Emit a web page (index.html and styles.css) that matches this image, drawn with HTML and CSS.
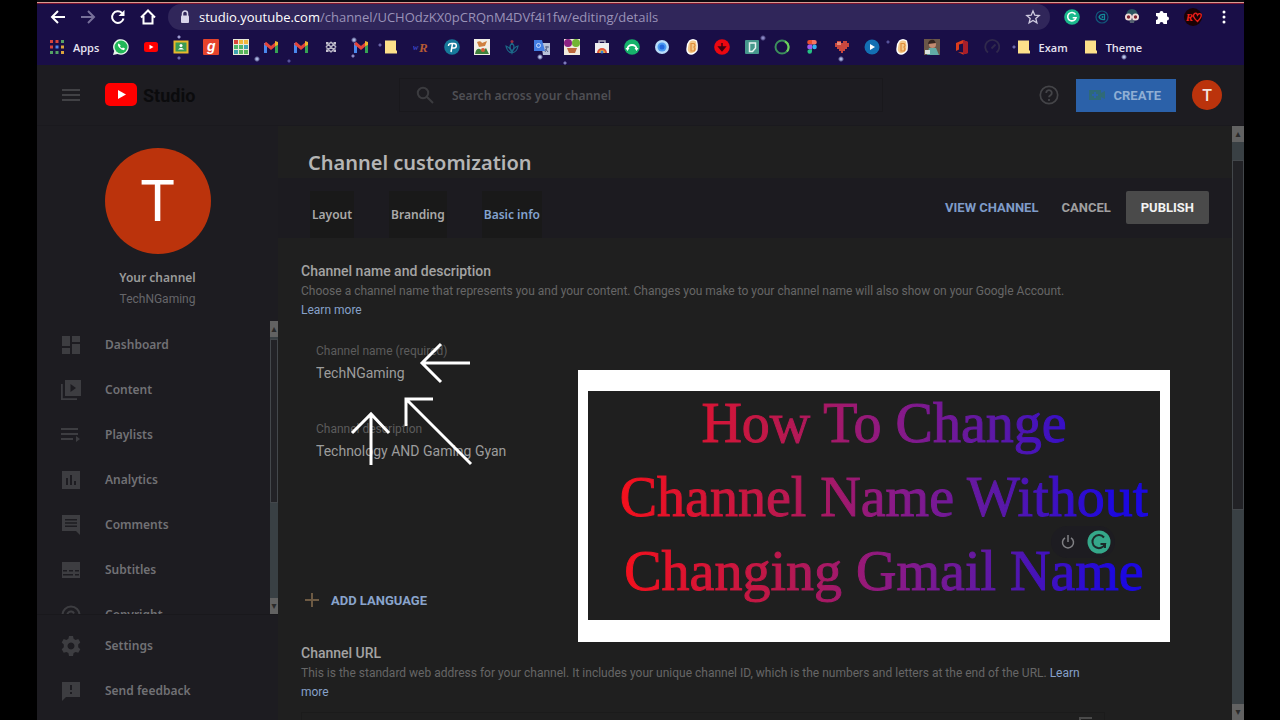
FILE: index.html
```
<!DOCTYPE html>
<html lang="en">
<head>
  <meta charset="UTF-8">
  <meta name="viewport" content="width=device-width, initial-scale=1.0">
  <title>Channel customization - YouTube Studio</title>
  <link rel="stylesheet" href="styles.css">
</head>
<body>
  <div class="screen">
    <div class="tabstrip"></div>

    <!-- browser toolbar -->
    <div class="toolbar">
      <button class="tool" aria-label="Back"><svg viewBox="0 0 16 16"><path d="M15 8H2M8 2L2 8l6 6" fill="none" stroke="#fff" stroke-width="2"/></svg></button>
      <button class="tool" aria-label="Forward"><svg viewBox="0 0 16 16"><path d="M1 8h13M8 2l6 6-6 6" fill="none" stroke="#77709a" stroke-width="2"/></svg></button>
      <button class="tool" aria-label="Reload"><svg viewBox="0 0 16 16"><path d="M13.5 9.5A5.8 5.8 0 1 1 12 4" fill="none" stroke="#fff" stroke-width="2"/><path d="M14.5 1v6h-6z" fill="#fff"/></svg></button>
      <button class="tool" aria-label="Home"><svg viewBox="0 0 16 16"><path d="M1 8.5L8 1.500l7 7M3.500 7v7.500h9V7" fill="none" stroke="#fff" stroke-width="2"/></svg></button>
      <div class="address">
        <svg class="lock" viewBox="0 0 10 14"><path d="M2.500 6V3.500a2.500 2.500 0 0 1 5 0V6" fill="none" stroke="#d8d4e8" stroke-width="1.500"/><rect x="1" y="5.500" width="8" height="7.500" rx="1" fill="#d8d4e8"/></svg>
        <span class="url"><b>studio.youtube.com</b>/channel/UCHOdzKX0pCRQnM4DVf4i1fw/editing/details</span>
        <svg class="star" viewBox="0 0 16 16"><path d="M8 2l1.800 4.200 4.400.4-3.400 2.900 1.100 4.400L8 11.500l-3.900 2.400 1.100-4.400L1.800 6.600l4.400-.4z" fill="none" stroke="#cfcbe0" stroke-width="1.300"/></svg>
      </div>
      <div class="extensions">
        <svg viewBox="0 0 16 16"><circle cx="8" cy="8" r="7.800" fill="#1bb98d"/><path d="M11.500 5.500A4.200 4.200 0 1 0 12 8.700H8.700" fill="none" stroke="#fff" stroke-width="1.600"/></svg>
        <svg viewBox="0 0 16 16"><circle cx="8" cy="8" r="6" fill="none" stroke="#12567a" stroke-width="1.200"/><path d="M10.500 5.500Q6 5 5 8q1 3 5.500 2.500z" fill="none" stroke="#138a97" stroke-width="1.300"/><circle cx="8.500" cy="8" r="1" fill="#138a97"/></svg>
        <svg viewBox="0 0 16 16"><path d="M2 6q1-6 6-6t6 6z" fill="#2b5560"/><path d="M5 10h6l-1 4H6z" fill="#546070"/><circle cx="4.500" cy="8" r="3.500" fill="#f0dcd8"/><circle cx="11.500" cy="8" r="3.500" fill="#f0dcd8"/><circle cx="4.500" cy="8" r="1.700" fill="#7c2430"/><circle cx="11.500" cy="8" r="1.700" fill="#7c2430"/></svg>
        <svg viewBox="0 0 16 16"><path d="M2 4h3.500a2 2 0 1 1 4 0H13v3.500a2 2 0 1 1 0 4V15H9.500a2 2 0 1 0-4 0H2v-4a2 2 0 1 0 0-4z" fill="#fff"/></svg>
        <svg class="wide" viewBox="0 0 20 20"><circle cx="10" cy="10" r="10" fill="#190205"/><text x="2" y="14" class="fav-serif" font-size="12" fill="#f1211b">R</text><path d="M15 15q-7-6-3-9 2-1 3 2 2-3 4-1 1 3-4 8z" fill="none" stroke="#e71e1b" stroke-width="1.500"/></svg>
        <svg viewBox="0 0 16 16" fill="#fff"><circle cx="8" cy="3" r="1.500"/><circle cx="8" cy="8" r="1.500"/><circle cx="8" cy="13" r="1.500"/></svg>
      </div>
    </div>

    <!-- bookmarks -->
    <div class="bookmarks">
      <a href="#" class="apps"><svg viewBox="0 0 16 16"><path d="M1 1h3v3H1zM6.500 1h3v3h-3zM1 6.500h3v3H1z" fill="#d8453c"/><path d="M12 1h3v3h-3zM1 12h3v3H1zM6.500 12h3v3h-3z" fill="#55a166"/><path d="M6.500 6.500h3v3h-3z" fill="#4e86ea"/><path d="M12 6.500h3v3h-3zM12 12h3v3h-3z" fill="#dca43d"/></svg>Apps</a>
      <div class="favs">
        <a href="#" aria-label="WhatsApp"><svg viewBox="0 0 16 16"><path d="M0 16l1.200-4A7.800 7.800 0 1 1 4.500 15z" fill="#e8f7ec"/><circle cx="8" cy="8" r="6.500" fill="#21b858"/><path d="M5.500 4.500q-1.500 1.500.7 4t4.800 2.700l1-1.700-2-1-1 .8q-1.500-.5-2-2l.7-1z" fill="#fff"/></svg></a>
        <a href="#" aria-label="YouTube"><svg viewBox="0 0 16 16"><rect x="1" y="3" width="14" height="10" rx="2.500" fill="#f00"/><path d="M6.500 5.700v4.600l4-2.300z" fill="#fff"/></svg></a>
        <a href="#" aria-label="Classroom"><svg viewBox="0 0 16 16"><rect x=".5" y="1.500" width="15" height="13" fill="#e8b82c"/><rect x="2.500" y="3.500" width="11" height="9" fill="#3a9b53"/><circle cx="8" cy="6.500" r="1.500" fill="#fff"/><path d="M5 10.500q3-3.500 6 0z" fill="#fff"/></svg></a>
        <a href="#" aria-label="Gaana"><svg viewBox="0 0 16 16"><rect width="16" height="16" rx="1" fill="#e5432c"/><text x="4" y="12" class="fav-bold" font-size="14" fill="#fff">g</text></svg></a>
        <a href="#" aria-label="Sheets"><svg viewBox="0 0 16 16"><rect width="16" height="16" fill="#e9ead8"/><path d="M1 1h4v4H1z" fill="#d8443a"/><path d="M6 1h4v4H6zM11 1h4v4h-4z" fill="#f0b93a"/><path d="M1 6h4v4H1zM6 6h4v4H6z" fill="#4db66a"/><path d="M11 6h4v4h-4zM1 11h4v4H1z" fill="#3fa3b0"/><path d="M6 11h4v4H6zM11 11h4v4h-4z" fill="#58b45b"/></svg></a>
        <a href="#" aria-label="Gmail"><svg viewBox="0 0 16 16"><path d="M2.500 14V4" stroke="#4a88ec" stroke-width="3"/><path d="M13.500 14V4" stroke="#36a354" stroke-width="3"/><path d="M2 4l6 5 6-5" fill="none" stroke="#e3453a" stroke-width="3"/><path d="M12 2l3 1v3l-3 1z" fill="#edb62c"/></svg></a>
        <a href="#" aria-label="Gmail"><svg viewBox="0 0 16 16"><path d="M2.500 14V4" stroke="#4a88ec" stroke-width="3"/><path d="M13.500 14V4" stroke="#36a354" stroke-width="3"/><path d="M2 4l6 5 6-5" fill="none" stroke="#e3453a" stroke-width="3"/><path d="M12 2l3 1v3l-3 1z" fill="#edb62c"/></svg></a>
        <a href="#" aria-label="Joomla"><svg viewBox="0 0 16 16"><path d="M5 5l6 6M11 5l-6 6M8 3L3 8M8 3l5 5M8 13L3 8M8 13l5-5" stroke="#b9b6c6" stroke-width="1.500"/><path d="M3 3h2.500v2.500H3zM10.500 3H13v2.500h-2.500zM3 10.500h2.500V13H3zM10.500 10.500H13V13h-2.500z" fill="#c4c1cf"/></svg></a>
        <a href="#" aria-label="Gmail"><svg viewBox="0 0 16 16"><path d="M2.500 14V4" stroke="#4a88ec" stroke-width="3"/><path d="M13.500 14V4" stroke="#36a354" stroke-width="3"/><path d="M2 4l6 5 6-5" fill="none" stroke="#e3453a" stroke-width="3"/><path d="M12 2l3 1v3l-3 1z" fill="#edb62c"/></svg></a>
        <a href="#" aria-label="Folder"><svg viewBox="0 0 16 16"><path d="M2 1.500h11v10h1v3H2z" fill="#fce08a"/></svg></a>
        <a href="#" aria-label="WR"><svg viewBox="0 0 16 16"><text x="0" y="11" class="fav-serif" font-size="8" fill="#3a45c8">w</text><text x="6" y="13" class="fav-serif" font-size="13" fill="#b55a34">R</text></svg></a>
        <a href="#" aria-label="Pexels"><svg viewBox="0 0 16 16"><circle cx="8" cy="8" r="7.800" fill="#16799a"/><path d="M7 13l1.500-8.500h1.500a2.300 2.300 0 0 1 0 4.600H8M4.500 7q0-3 4-2.500" fill="none" stroke="#fff" stroke-width="1.500"/></svg></a>
        <a href="#" aria-label="Art"><svg viewBox="0 0 16 16"><path d="M0 0h16v16H0z" fill="#f2efe6"/><path d="M3 3q4-2 5 1l5-2-2 5-6 1z" fill="#cf803f"/><path d="M1 15q1-6 5-5l3 2 3-3 3 6z" fill="#3f813c"/><circle cx="9" cy="11" r="2" fill="#d55b34"/></svg></a>
        <a href="#" aria-label="Lotus"><svg viewBox="0 0 16 16"><path d="M8 14Q3 13 2 7q4 1 6 7 2-6 6-7-1 6-6 7zM8 12Q4 8 8 4q4 4 0 8z" fill="none" stroke="#1b6787" stroke-width="1.200"/><circle cx="8" cy="2.500" r="1.500" fill="#9a3042"/></svg></a>
        <a href="#" aria-label="Translate"><svg viewBox="0 0 16 16"><path d="M7 4h9v12H9z" fill="#b9c2d8"/><path d="M0 1h8l3 11H0z" fill="#437ee2"/><circle cx="4.500" cy="6.500" r="2" fill="none" stroke="#c7dcff" stroke-width="1"/><path d="M11 8h4M13 7q0 4-2 6M11 10q2 1 3 3" fill="none" stroke="#586588"/></svg></a>
        <a href="#" aria-label="Flowers"><svg viewBox="0 0 16 16"><path d="M0 0h16v16H0z" fill="#f1ebdd"/><circle cx="4" cy="4" r="4" fill="#8c2284"/><circle cx="12" cy="4" r="4" fill="#72b533"/><path d="M3 9h10l-2 5H5z" fill="#be683c"/></svg></a>
        <a href="#" aria-label="Web Store"><svg viewBox="0 0 16 16"><path d="M1 4h14v10H1z" fill="#efedef"/><path d="M5 4V2h6v2" fill="none" stroke="#b6b1c6" stroke-width="1.500"/><path d="M3 14a5 5 0 0 1 10 0z" fill="#e05139"/><path d="M5 14a3 3 0 0 1 6 0z" fill="#edb83d"/><circle cx="8" cy="13" r="1.500" fill="#3f81d7"/></svg></a>
        <a href="#" aria-label="Green arc"><svg viewBox="0 0 16 16"><circle cx="8" cy="8" r="7.800" fill="#16b26b"/><path d="M3.500 10a4.500 4 0 0 1 9 0" fill="none" stroke="#fff" stroke-width="1.800"/><path d="M1.500 9h4l-2 3zM10.500 9h4l-2 3z" fill="#fff"/></svg></a>
        <a href="#" aria-label="Blue dot"><svg viewBox="0 0 16 16"><circle cx="8" cy="8" r="7" fill="#b9dcfa"/><circle cx="8" cy="8" r="4.500" fill="#4b9af2"/><circle cx="8" cy="8" r="2.500" fill="#2468dd"/></svg></a>
        <a href="#" aria-label="B"><svg viewBox="0 0 16 16"><path d="M5 1.500q4-3 8 0 1.500 5 .5 10-3 5-8 4-4-2-3-7 0-4 2.500-7z" fill="#fff"/><path d="M6 2.500q3-2 6 0 1 4 .3 8.500-2.300 4-6.300 3-3-2-2-5.500 0-3.500 2-6z" fill="#f4c98a"/><path d="M7 4.500h3q2 2 0 3.500 2 2 0 4H7z" fill="none" stroke="#e08f3c" stroke-width="1.200"/></svg></a>
        <a href="#" aria-label="Downloader"><svg viewBox="0 0 16 16"><circle cx="8" cy="8" r="7.800" fill="#eb0710"/><path d="M8 4v5M5 8l3 3.500L11 8z" fill="#3d0311" stroke="#3d0311" stroke-width="1.500"/></svg></a>
        <a href="#" aria-label="Pixabay"><svg viewBox="0 0 16 16"><rect x="1" y="1" width="14" height="14" rx="1" fill="#46988c"/><path d="M5.500 4h6v5l-3 3.500h-3z" fill="none" stroke="#e7f4f1" stroke-width="1.500"/></svg></a>
        <a href="#" aria-label="Ring"><svg viewBox="0 0 16 16"><circle cx="8" cy="8" r="6.500" fill="none" stroke="#3c8f5c" stroke-width="2"/><path d="M11 2.500a6.500 6.500 0 0 1 2 10" fill="none" stroke="#6fd05b" stroke-width="2"/></svg></a>
        <a href="#" aria-label="Figma"><svg viewBox="0 0 16 16"><path d="M8 1H5.500a2.300 2.300 0 0 0 0 4.600H8z" fill="#e9502e"/><path d="M8 1h2.500a2.300 2.300 0 0 1 0 4.600H8z" fill="#f87564"/><path d="M8 5.600H5.500a2.300 2.300 0 0 0 0 4.600H8z" fill="#a05aef"/><circle cx="10.500" cy="7.900" r="2.300" fill="#36b1ee"/><path d="M8 10.200H5.500A2.300 2.300 0 1 0 8 12.500z" fill="#25c083"/></svg></a>
        <a href="#" aria-label="Heart"><svg viewBox="0 0 16 16"><path d="M3 2h4v2h2V2h4v2h2v4h-2v2h-2v2H9v2H7v-2H5v-2H3V8H1V4h2z" fill="#c8473e"/><path d="M3 3h4v3H3z" fill="#e58b78"/></svg></a>
        <a href="#" aria-label="Player"><svg viewBox="0 0 16 16"><circle cx="8" cy="8" r="7.500" fill="#136fb3"/><path d="M6 5v6l5-3z" fill="#fff"/></svg></a>
        <a href="#" aria-label="B"><svg viewBox="0 0 16 16"><path d="M5 1.500q4-3 8 0 1.500 5 .5 10-3 5-8 4-4-2-3-7 0-4 2.500-7z" fill="#fff"/><path d="M6 2.500q3-2 6 0 1 4 .3 8.500-2.300 4-6.300 3-3-2-2-5.500 0-3.500 2-6z" fill="#f4c98a"/><path d="M7 4.500h3q2 2 0 3.500 2 2 0 4H7z" fill="none" stroke="#e08f3c" stroke-width="1.200"/></svg></a>
        <a href="#" aria-label="Photo"><svg viewBox="0 0 16 16"><path d="M0 0h16v16H0z" fill="#6a5648"/><path d="M5 9h7l3 7H3z" fill="#61aaa5"/><circle cx="8.500" cy="5.500" r="3.500" fill="#c28a70"/><path d="M4 5q1-5 6-4l2 3z" fill="#33231e"/><path d="M1 11h5v4H1z" fill="#d9e2df"/></svg></a>
        <a href="#" aria-label="Office"><svg viewBox="0 0 16 16"><path d="M2 4l7-3 5 2v11l-5 1.500L4 13l5 .5V4.500L5 5.500v5L2 12z" fill="#dc3c1c"/><path d="M9 1l5 2v11l-5 1.500z" fill="#a81e2a"/></svg></a>
        <a href="#" aria-label="Gauge"><svg viewBox="0 0 16 16"><path d="M4 13.500a7 7 0 1 1 8.500 0M7.500 9.500l4-4" fill="none" stroke="#30294c" stroke-width="1.800"/></svg></a>
      </div>
      <a href="#" class="folder"><svg viewBox="0 0 16 16"><path d="M2 1.500h11v10h1v3H2z" fill="#fce08a"/></svg>Exam</a>
      <a href="#" class="folder"><svg viewBox="0 0 16 16"><path d="M2 1.500h11v10h1v3H2z" fill="#fce08a"/></svg>Theme</a>
    </div>

    <!-- studio header -->
    <header class="header">
      <button class="menu" aria-label="Menu"><svg viewBox="0 0 18 12"><path d="M0 1h18M0 6h18M0 11h18" stroke="#414145" stroke-width="2"/></svg></button>
      <a href="#" class="logo">
        <svg viewBox="0 0 32 24"><rect width="32" height="23" rx="5" fill="#f00"/><path d="M13 7v9l8-4.500z" fill="#fff"/></svg>
        <span>Studio</span>
      </a>
      <div class="search">
        <svg viewBox="0 0 18 18"><circle cx="7" cy="7" r="5.200" fill="none" stroke="#3b3b3f" stroke-width="2"/><path d="M11 11l6 6" stroke="#3b3b3f" stroke-width="2"/></svg>
        <input type="text" aria-label="Search" placeholder="Search across your channel">
      </div>
      <div class="account">
        <button class="help" aria-label="Help"><svg viewBox="0 0 20 20"><circle cx="10" cy="10" r="8.700" fill="none" stroke="#444448" stroke-width="1.700"/><path d="M7.200 8a2.800 2.800 0 1 1 4.300 2.300Q10 11.300 10 12.300M10 14v2" fill="none" stroke="#444448" stroke-width="1.800"/></svg></button>
        <button class="create"><svg viewBox="0 0 18 14"><path d="M1 2h12v3l4-2v8l-4-2v3H1z" fill="#2f6a78"/><path d="M7 4v6M4 7h6" stroke="#2b61a9" stroke-width="2"/></svg>CREATE</button>
        <button class="avatar">T</button>
      </div>
    </header>

    <div class="app">
      <aside class="sidebar">
        <div class="profile">
          <div class="photo">T</div>
          <strong>Your channel</strong>
          <span>TechNGaming</span>
        </div>
        <div class="nav-wrap">
          <nav class="nav">
            <a href="#"><svg viewBox="0 0 20 20"><path d="M1 1h8v10H1zM11 1h8v6h-8zM1 13h8v6H1zM11 9h8v10h-8z"/></svg>Dashboard</a>
            <a href="#"><svg viewBox="0 0 20 20"><path d="M4 0h16v16H4zM9.500 4v8l5.500-4zM0 4h1.800v14.200H16V20H0z" fill-rule="evenodd"/></svg>Content</a>
            <a href="#"><svg viewBox="0 0 20 20"><path d="M0 3h17v2H0zM0 8h17v2H0zM0 13h12v2H0zM15 11l4 3-4 3z"/></svg>Playlists</a>
            <a href="#"><svg viewBox="0 0 20 20"><path d="M1 1h18v18H1zM5 8v7h2V8zM9 5v10h2V5zM13 11v4h2v-4z" fill-rule="evenodd"/></svg>Analytics</a>
            <a href="#"><svg viewBox="0 0 20 20"><path d="M1 0h18v20l-4-4H1zM4 4v1.500h12V4zM4 7.300v1.500h12V7.300zM4 10.600v1.500h12v-1.500z" fill-rule="evenodd"/></svg>Comments</a>
            <a href="#"><svg viewBox="0 0 20 20"><path d="M1 2h18v16H1zM2 10v1.500h4V10zM8 10v1.500h4V10zM14 10v1.500h4V10zM2 14v1.500h10V14zM14 14v1.500h4V14z" fill-rule="evenodd"/></svg>Subtitles</a>
            <a href="#"><svg viewBox="0 0 20 20"><circle cx="10" cy="10" r="8.500" fill="none" stroke="#3d3d41" stroke-width="2"/><path d="M13 8.500a3.500 3.500 0 1 0 0 3" fill="none" stroke="#3d3d41" stroke-width="2"/></svg>Copyright</a>
          </nav>
          <div class="scrollbar nav-scroll"><i class="up">▴</i><i class="thumb"></i><i class="down">▾</i></div>
        </div>
        <nav class="nav nav-bottom">
          <a href="#"><svg viewBox="0 0 20 20"><path d="M8 0h4l.6 2.800 2 1.100 2.700-.9 2 3.500L17.200 8.500v2.800l2.100 2-2 3.500-2.700-.9-2 1.200L12 20H8l-.6-2.900-2-1.200-2.700.9-2-3.500 2.100-2V8.500L.7 6.500l2-3.500 2.700.9 2-1.100zM10 6.500a3.500 3.500 0 1 0 .01 0z" fill-rule="evenodd"/></svg>Settings</a>
          <a href="#"><svg viewBox="0 0 20 20"><path d="M1 1h18v15H5l-4 4zM9 4v5h2V4zM9 11v2h2v-2z" fill-rule="evenodd"/></svg>Send feedback</a>
        </nav>
      </aside>

      <main class="main">
        <h1>Channel customization</h1>
        <div class="tabbar">
          <div class="tabs">
            <button>Layout</button>
            <button>Branding</button>
            <button class="active">Basic info</button>
          </div>
          <div class="actions">
            <a href="#">VIEW CHANNEL</a>
            <button>CANCEL</button>
            <button class="publish">PUBLISH</button>
          </div>
        </div>

        <section class="content">
          <h2>Channel name and description</h2>
          <p>Choose a channel name that represents you and your content. Changes you make to your channel name will also show on your Google Account.<br><a href="#">Learn more</a></p>

          <div class="field">
            <label for="channelName">Channel name (required)</label>
            <input type="text" id="channelName" value="TechNGaming">
          </div>
          <div class="field">
            <label for="channelDesc">Channel description</label>
            <textarea id="channelDesc">Technology AND Gaming Gyan</textarea>
          </div>
          <button class="add-lang"><svg viewBox="0 0 14 14"><path d="M7 0v14M0 7h14" stroke="#6d5a43" stroke-width="2"/></svg>ADD LANGUAGE</button>

          <h2>Channel URL</h2>
          <p class="url-note">This is the standard web address for your channel. It includes your unique channel ID, which is the numbers and letters at the end of the URL. <a href="#">Learn more</a></p>
          <div class="url-box"><svg viewBox="0 0 14 14"><path d="M1 12V1h12M4 4h9v10" fill="none" stroke="#4a4a4a" stroke-width="2"/></svg></div>
        </section>
      </main>
      <div class="scrollbar page-scroll"><i class="up">▴</i><i class="thumb"></i><i class="down">▾</i></div>
    </div>

    <!-- hand drawn arrows over the form -->
    <svg class="arrows" viewBox="0 0 130 130" fill="none" stroke="#fff" stroke-width="3">
      <path d="M130 23H82M101 4L82 23l19 19"/>
      <path d="M131 124L67 60M93 59H66v27"/>
      <path d="M31 125V74M12 93l19-19 18 19"/>
    </svg>

    <div class="banner"><p><span>How To Change<br>Channel Name Without<br>Changing Gmail Name</span></p></div>

    <div class="grammar">
      <svg viewBox="0 0 14 14"><path d="M4 2.800a5.500 5.500 0 1 0 6 0M7 0v7" fill="none" stroke="#808084" stroke-width="1.500"/></svg>
      <svg class="g" viewBox="0 0 24 24"><circle cx="12" cy="12" r="11.500" fill="#35a88a"/><path d="M17 7.500A6.500 6.500 0 1 0 18 14h-4.500M18 18v-4" fill="none" stroke="#1c2b2a" stroke-width="2"/></svg>
    </div>
  </div>
</body>
</html>
```
FILE: styles.css
```
* { box-sizing: border-box; }
body { margin: 0; background: #000; font-family: Roboto, "Liberation Sans", sans-serif; font-size: 12px; color: #9a9a9a; }
a { text-decoration: none; color: inherit; }
button { background: none; border: none; padding: 0; font: inherit; color: inherit; cursor: pointer; }
input, textarea { background: none; border: none; outline: none; padding: 0; font: inherit; color: inherit; resize: none; }
svg { display: block; flex: none; }
.screen { position: relative; height: 100vh; margin: 0 36px 0 37px; overflow: hidden; display: flex; flex-direction: column; background: #1d1c21; }

/* browser chrome */
.tabstrip { height: 4px; flex: none; background: linear-gradient(#0c0b10 2px, #d99a90 2px, #d99a90 3px, #7a1430 3px); }
.toolbar { height: 28px; flex: none; display: flex; align-items: center; gap: 14px; padding: 0 12px 2px 13px; background: #190e47; }
.tool, .tool svg { width: 16px; height: 16px; }
.address { flex: 1; display: flex; align-items: center; height: 26px; margin-left: -2px; padding: 0 9px 0 12px; border-radius: 13px; background: #30265a; }
.lock { width: 10px; height: 14px; margin-right: 9px; }
.url { flex: 1; font-family: "Open Sans", sans-serif; font-size: 13px; color: #9a93b8; white-space: nowrap; }
.url b { font-weight: 400; color: #fff; }
.star { width: 16px; height: 16px; }
.extensions { display: flex; align-items: center; gap: 14px; }
.extensions svg { width: 16px; height: 16px; }
.extensions .wide { width: 18px; height: 18px; }
.fav-serif { font-family: "Liberation Serif", serif; font-weight: bold; font-style: italic; }
.fav-bold { font-family: "Liberation Sans", sans-serif; font-weight: bold; font-style: italic; }

.bookmarks {
  height: 33px; flex: none; display: flex; align-items: center; padding: 0 102px 3px 12px;
  font-family: "Open Sans", sans-serif; font-size: 11px; font-weight: 600; color: #e6e3f0;
  background:
    radial-gradient(circle at 142px 5px, #9d9bd0 1px, transparent 2px),
    radial-gradient(circle at 142px 26px, #6a66a8 1px, transparent 2px),
    radial-gradient(circle at 220px 27px, #a9b5e0 1px, transparent 3px),
    radial-gradient(circle at 252px 29px, #56529a 1px, transparent 2px),
    radial-gradient(circle at 317px 8px, #a9b5e0 1px, transparent 3px),
    radial-gradient(circle at 316px 24px, #8a88c4 1px, transparent 2px),
    radial-gradient(circle at 343px 13px, #6a66a8 1px, transparent 2px),
    radial-gradient(circle at 503px 25px, #b9c5ea 1px, transparent 3px),
    radial-gradient(circle at 528px 31px, #7d7abb 1px, transparent 2px),
    radial-gradient(circle at 726px 6px, #8a88c4 1px, transparent 3px),
    radial-gradient(circle at 804px 27px, #a9b5e0 1px, transparent 3px),
    radial-gradient(circle at 851px 10px, #56529a 1px, transparent 2px),
    radial-gradient(circle at 977px 15px, #6a66a8 1px, transparent 2px),
    radial-gradient(circle at 1087px 25px, #b9c5ea 1px, transparent 3px),
    #190e47;
}
.bookmarks svg { width: 16px; height: 16px; }
.bookmarks a { display: flex; align-items: center; }
.apps { gap: 8px; width: 64px; }
.favs { flex: 1; display: flex; justify-content: space-between; }
.folder { gap: 7px; margin-left: 15px; }

/* studio header */
.header { height: 61px; flex: none; display: flex; align-items: center; padding: 0 22px 0 25px; background: #1d1c21; border-bottom: 1px solid #1a191e; }
.menu svg { width: 18px; height: 12px; }
.logo { display: flex; align-items: center; gap: 6px; width: 294px; margin-left: 25px; font-size: 18px; font-weight: 700; color: #0b0b0d; }
.logo svg { width: 32px; height: 24px; }
.search { flex: 1; max-width: 484px; height: 34px; display: flex; align-items: center; gap: 18px; padding: 0 16px; border: 1px solid #19181c; }
.search svg { width: 18px; height: 18px; }
.search input { flex: 1; font-family: "Noto Sans", sans-serif; font-weight: 600; }
.search input::placeholder { color: #4f4f54; opacity: 1; }
.account { display: flex; align-items: center; margin-left: auto; }
.help svg { width: 20px; height: 20px; }
.create { display: flex; align-items: center; gap: 8px; height: 33px; margin: 0 16px 0 17px; padding: 0 15px 0 12px; background: #2b61a9; color: #8faed4; font-size: 13px; font-weight: 700; }
.create svg { width: 18px; height: 14px; }
.avatar { width: 30px; height: 30px; border-radius: 50%; background: #bb330c; color: #f3e4df; font-size: 16px; font-weight: 500; }

.app { flex: 1; min-height: 0; display: flex; }

/* sidebar */
.sidebar { width: 241px; flex: none; display: flex; flex-direction: column; font-family: "Noto Sans", sans-serif; }
.profile { height: 194px; flex: none; display: flex; flex-direction: column; align-items: center; padding-top: 22px; }
.photo { width: 106px; height: 106px; border-radius: 50%; background: #bb330c; color: #fff; font: 400 58px/106px Roboto, sans-serif; text-align: center; }
.profile strong { margin-top: 15px; line-height: 18px; font-weight: 600; }
.profile span { margin-top: 3px; font: 12px/18px Roboto, sans-serif; color: #66666a; }
.nav-wrap { flex: 1; min-height: 0; display: flex; }
.nav { flex: 1; overflow: hidden; padding-top: 2px; font-weight: 600; color: #717175; }
.nav a { display: flex; align-items: center; height: 45px; padding-left: 24px; }
.nav svg { width: 20px; height: 20px; margin-right: 24px; fill: #3d3d41; }
.nav-bottom { height: 106px; flex: none; padding-top: 8px; border-top: 1px solid #19181c; }

.scrollbar { display: flex; flex-direction: column; background: #394044; }
.scrollbar i { display: block; flex: none; font: 10px/15px "DejaVu Sans", sans-serif; text-align: center; color: #2a2a2a; }
.scrollbar .up, .scrollbar .down { height: 16px; background: #626262; }
.scrollbar .down { margin-top: auto; }
.scrollbar .thumb { background: #222226; border: 1px solid #43474b; }
.nav-scroll { width: 8px; margin-top: 1px; }
.nav-scroll .thumb { height: 56%; margin-top: 2px; }
.page-scroll { width: 12px; flex: none; }
.page-scroll .thumb { height: 59%; margin-top: 18px; }

/* main column */
.main { flex: 1; min-width: 0; overflow: hidden; background: #1f1f1f; }
h1 { margin: 0; height: 52px; padding: 22px 0 0 30px; font: 600 20px/30px "Noto Sans", sans-serif; color: #b5b5b5; }
.tabbar { display: flex; justify-content: space-between; height: 60px; padding: 13px 23px 0 32px; background: #1c1b20; }
.tabs { display: flex; gap: 35px; }
.tabs button { height: 47px; padding: 0 2px; background: #191919; font-family: "Noto Sans", sans-serif; font-weight: 600; color: #a9a9a9; }
.tabs .active { color: #84a3cf; }
.actions { display: flex; align-items: center; height: 33px; font-size: 13px; font-weight: 700; color: #a0a0a0; }
.actions a { margin-right: 23px; color: #7f9cc9; }
.publish { height: 33px; margin-left: 15px; padding: 0 15px; background: #4a4a4a; border-radius: 2px; color: #f2f2f2; }

.content { padding: 23px 127px 0 23px; }
h2 { margin: 0; font-size: 14px; line-height: 20px; font-weight: 500; color: #a3a3a3; }
.content p { margin: 1px 0 0; line-height: 19px; color: #666; white-space: nowrap; }
.content p a { color: #86a1c9; }
.content .url-note { white-space: normal; }
.field { display: flex; flex-direction: column; padding: 22px 0 0 15px; }
.field label { line-height: 18px; color: #5c5c5c; }
.field input, .field textarea { margin-top: 3px; height: 20px; font-size: 14px; line-height: 20px; color: #9c9c9c; }
.field + .field { padding-top: 37px; }
.field textarea { height: 139px; }
.add-lang { display: flex; align-items: center; gap: 12px; height: 40px; padding-left: 4px; font-size: 13px; font-weight: 700; color: #89a4cc; }
.add-lang svg { width: 14px; height: 14px; }
.add-lang + h2 { margin-top: 23px; }
.url-box { display: flex; justify-content: flex-end; height: 40px; margin-top: 10px; padding: 4px 11px; border: 1px solid #1b1b1b; }
.url-box svg { width: 14px; height: 14px; }

/* overlays */
.arrows { position: absolute; left: 303px; top: 340px; width: 130px; height: 130px; overflow: visible; }
.banner { position: absolute; left: 541px; top: 370px; right: 74px; padding: 21px 10px 22px; background: #fff; }
.banner p { display: flex; align-items: center; justify-content: center; margin: 0; height: 229px; padding: 0 0 18px 20px; background: #1f1f1f; }
.banner span {
  font: 56px/74px "Liberation Serif", serif; text-align: center; white-space: nowrap;
  color: transparent; -webkit-text-stroke: 1px transparent;
  background: linear-gradient(90deg, #f5101c, #c01848 28%, #8a1a88 52%, #5a18a8 72%, #1c08e0 94%);
  -webkit-background-clip: text; background-clip: text;
}
.grammar { position: absolute; left: 1014px; top: 526px; display: flex; align-items: center; gap: 12px; height: 32px; padding: 0 4px 0 10px; border-radius: 16px; background: #1d1c21; }
.grammar svg { width: 14px; height: 14px; }
.grammar .g { width: 24px; height: 24px; }
```
